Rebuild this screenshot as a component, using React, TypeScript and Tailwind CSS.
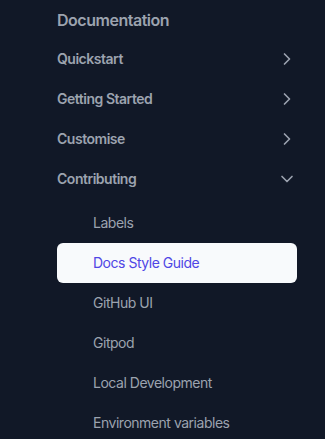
import { ChevronDown, ChevronRight } from "lucide-react";

const sections = [
  { label: "Quickstart", open: false },
  { label: "Getting Started", open: false },
  { label: "Customise", open: false },
  { label: "Contributing", open: true },
];

const pages = [
  "Labels",
  "Docs Style Guide",
  "GitHub UI",
  "Gitpod",
  "Local Development",
  "Environment variables",
];

export default function App() {
  const active = "Docs Style Guide";

  return (
    <div
      className="min-h-[439px] w-[325px] overflow-hidden bg-[#111827] pl-[57px] pr-[28px] tracking-[-0.03em]"
      style={{ fontFamily: "Inter, 'Noto Sans', sans-serif" }}
    >
      <h2 className="flex h-[39px] items-center text-base font-semibold text-[#9ca3af]">
        Documentation
      </h2>
      <ul>
        {sections.map((s) => (
          <li key={s.label}>
            <button className="flex h-10 w-full items-center justify-between text-sm font-semibold text-[#9ca3af]">
              <span>{s.label}</span>
              {s.open ? (
                <ChevronDown className="h-5 w-5" strokeWidth={2} />
              ) : (
                <ChevronRight className="h-5 w-5" strokeWidth={2} />
              )}
            </button>
          </li>
        ))}
      </ul>
      <ul className="mt-1">
        {pages.map((p) => (
          <li key={p}>
            <a
              href="#"
              className={
                p === active
                  ? "flex h-10 items-center rounded-md bg-[#f8fafc] pl-9 text-sm text-[#4f46e5]"
                  : "flex h-10 items-center pl-9 text-sm text-[#9ca3af]"
              }
            >
              {p}
            </a>
          </li>
        ))}
      </ul>
    </div>
  );
}
